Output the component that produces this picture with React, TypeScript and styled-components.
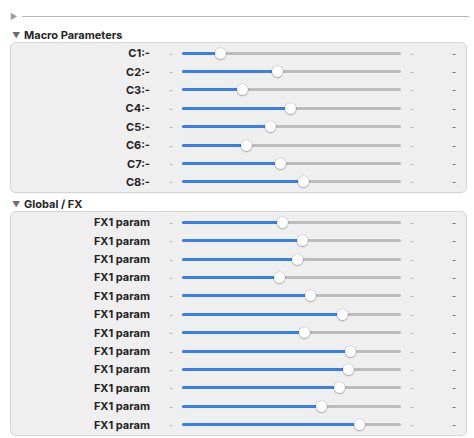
import React from "react";
import styled, { createGlobalStyle } from "styled-components";

const GlobalStyle = createGlobalStyle`
  html, body {
    margin: 0;
    padding: 0;
    background: #ffffff;
  }
  body {
    font-family: Inter, "Liberation Sans", Arial, sans-serif;
    -webkit-font-smoothing: antialiased;
  }
`;

const TRACK_START = 182;
const TRACK_WIDTH = 219;

const Page = styled.div`
  width: 474px;
  box-sizing: border-box;
  padding: 9px 5px 0 10px;
  display: flex;
  flex-direction: column;
`;

const TopRow = styled.div`
  height: 14px;
  display: flex;
  align-items: center;
`;

const Disclosure = styled.span<{ $open?: boolean }>`
  width: 12px;
  flex: none;
  font-size: 8px;
  line-height: 1;
  color: ${(p) => (p.$open ? "#6c6c6c" : "#9c9c9c")};
  padding-left: ${(p) => (p.$open ? "2px" : "0")};
`;

const Rule = styled.div`
  flex: 1;
  height: 1px;
  background: #b8b8b8;
`;

const SectionHeader = styled.div<{ $gap: number }>`
  height: 14px;
  margin-top: ${(p) => p.$gap}px;
  display: flex;
  align-items: center;
  font-size: 11px;
  font-weight: 700;
  color: #262626;
`;

const Panel = styled.div`
  margin-right: 2px;
  border: 1px solid #d5d5d5;
  border-radius: 6px;
  background: #efefef;
  padding: 1px 0;
  box-shadow: 0 1px 0 rgba(0, 0, 0, 0.04);
  display: flex;
  flex-direction: column;
`;

const Row = styled.div`
  height: 18.4px;
  display: flex;
  align-items: center;
`;

const Label = styled.div`
  width: 139px;
  flex: none;
  text-align: right;
  font-size: 11px;
  font-weight: 700;
  color: #1f1f1f;
  white-space: nowrap;
`;

const Dash = styled.div<{ $dark?: boolean; $w: number; $ml?: number }>`
  width: ${(p) => p.$w}px;
  margin-left: ${(p) => p.$ml ?? 0}px;
  flex: none;
  text-align: center;
  font-size: 9px;
  line-height: 1;
  color: ${(p) => (p.$dark ? "#4a4a4a" : "#ababab")};
`;

const MinDash = styled(Dash)`
  padding-left: 10px;
  box-sizing: border-box;
`;

const Track = styled.div`
  position: relative;
  width: ${TRACK_WIDTH}px;
  height: 3px;
  flex: none;
  border-radius: 2px;
  background: #bcbcbc;
`;

const Fill = styled.div`
  position: absolute;
  left: 0;
  top: 0;
  bottom: 0;
  border-radius: 2px;
  background: #3a7fe5;
`;

const Thumb = styled.div`
  position: absolute;
  top: 50%;
  width: 11px;
  height: 11px;
  margin-left: -5.5px;
  margin-top: -5.5px;
  border-radius: 50%;
  background: #ffffff;
  box-shadow: 0 0 0 0.5px rgba(0, 0, 0, 0.18), 0 1px 1.5px rgba(0, 0, 0, 0.25);
`;

type SliderProps = { at: number };

function Slider({ at }: SliderProps) {
  const offset = at - TRACK_START;
  return (
    <Track>
      <Fill style={{ width: offset }} />
      <Thumb style={{ left: offset }} />
    </Track>
  );
}

function ParamRow({ label, at }: { label: string; at: number }) {
  return (
    <Row>
      <Label>{label}</Label>
      <MinDash $w={32}>-</MinDash>
      <Slider at={at} />
      <Dash $w={22}>-</Dash>
      <Dash $w={22} $ml={20} $dark>
        -
      </Dash>
    </Row>
  );
}

const macros = [220, 277, 242, 290, 270, 246, 280, 303];
const fx = [282, 302, 297, 279, 310, 342, 304, 350, 348, 339, 321, 359];

export default function App() {
  return (
    <>
      <GlobalStyle />
      <Page>
        <TopRow>
          <Disclosure>▶</Disclosure>
          <Rule />
        </TopRow>

        <SectionHeader $gap={5}>
          <Disclosure $open>▼</Disclosure>
          Macro Parameters
        </SectionHeader>
        <Panel>
          {macros.map((at, i) => (
            <ParamRow key={i} label={`C${i + 1}:-`} at={at} />
          ))}
        </Panel>

        <SectionHeader $gap={4}>
          <Disclosure $open>▼</Disclosure>
          Global / FX
        </SectionHeader>
        <Panel>
          {fx.map((at, i) => (
            <ParamRow key={i} label="FX1 param" at={at} />
          ))}
        </Panel>
      </Page>
    </>
  );
}
